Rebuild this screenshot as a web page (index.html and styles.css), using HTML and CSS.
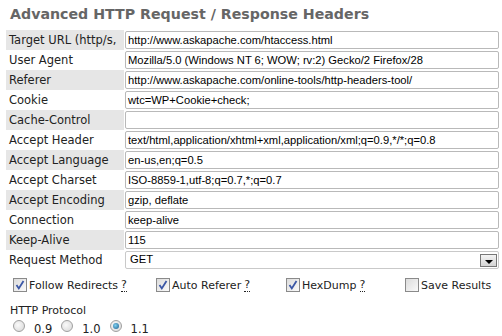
FILE: index.html
```html
<!DOCTYPE html>
<html>
<head>
<meta charset="utf-8">
<link rel="stylesheet" href="styles.css">
</head>
<body>
<h1 class="title">Advanced HTTP Request / Response Headers</h1>
<div class="form">
  <div class="lbl alt">Target URL (http/s,</div><div class="input">http://www.askapache.com/htaccess.html</div>
  <div class="lbl">User Agent</div><div class="input">Mozilla/5.0 (Windows NT 6; WOW; rv:2) Gecko/2 Firefox/28</div>
  <div class="lbl alt">Referer</div><div class="input">http://www.askapache.com/online-tools/http-headers-tool/</div>
  <div class="lbl">Cookie</div><div class="input">wtc=WP+Cookie+check;</div>
  <div class="lbl alt">Cache-Control</div><div class="input"></div>
  <div class="lbl">Accept Header</div><div class="input">text/html,application/xhtml+xml,application/xml;q=0.9,*/*;q=0.8</div>
  <div class="lbl alt">Accept Language</div><div class="input">en-us,en;q=0.5</div>
  <div class="lbl">Accept Charset</div><div class="input">ISO-8859-1,utf-8;q=0.7,*;q=0.7</div>
  <div class="lbl alt">Accept Encoding</div><div class="input">gzip, deflate</div>
  <div class="lbl">Connection</div><div class="input">keep-alive</div>
  <div class="lbl alt">Keep-Alive</div><div class="input">115</div>
  <div class="lbl">Request Method</div><div class="select"><span class="sel-text">GET</span><span class="sel-btn"><svg width="10" height="6" viewBox="0 0 10 6"><path d="M1 1h8L5 5z" fill="#000"/></svg></span></div>
</div>
<div class="opts">
  <label class="opt w1"><span class="cb on"><svg width="14" height="14" viewBox="0 0 14 14"><path d="M3.5 7l2.3 3.4L10.5 3" fill="none" stroke="#3b57a6" stroke-width="1.8"/></svg></span>Follow Redirects <abbr>?</abbr></label>
  <label class="opt w2"><span class="cb on"><svg width="14" height="14" viewBox="0 0 14 14"><path d="M3.5 7l2.3 3.4L10.5 3" fill="none" stroke="#3b57a6" stroke-width="1.8"/></svg></span>Auto Referer <abbr>?</abbr></label>
  <label class="opt w3"><span class="cb on"><svg width="14" height="14" viewBox="0 0 14 14"><path d="M3.5 7l2.3 3.4L10.5 3" fill="none" stroke="#3b57a6" stroke-width="1.8"/></svg></span>HexDump <abbr>?</abbr></label>
  <label class="opt"><span class="cb"></span>Save Results</label>
</div>
<div class="proto">
  <div class="proto-title">HTTP Protocol</div>
  <div class="radios">
    <span class="rb"></span><span class="rl">0.9</span>
    <span class="rb"></span><span class="rl">1.0</span>
    <span class="rb on"></span><span class="rl">1.1</span>
  </div>
</div>
</body>
</html>
```
FILE: styles.css
```css
html, body {
  margin: 0;
  padding: 0;
  background: #fff;
}
body {
  font-family: "DejaVu Sans", Verdana, sans-serif;
  color: #222;
  width: 502px;
  height: 336px;
  overflow: hidden;
}
.title {
  margin: 0;
  padding: 5px 0 0 10px;
  height: 26px;
  box-sizing: border-box;
  font-size: 14.2px;
  font-weight: bold;
  color: #666;
  line-height: 19px;
}
.form {
  margin: 4px 3px 0 6px;
  display: grid;
  grid-template-columns: 118px 1fr;
  grid-auto-rows: 20px;
  column-gap: 1px;
}
.lbl {
  font-size: 11.5px;
  line-height: 20px;
  padding-left: 3px;
  white-space: nowrap;
  overflow: hidden;
  color: #222;
}
.lbl.alt {
  background: #e6e6e6;
}
.input, .select {
  margin: 1px 0;
  height: 18px;
  box-sizing: border-box;
  border: 1px solid #b9b9b9;
  border-radius: 2px;
  font-family: "Liberation Sans", Arial, sans-serif;
  font-size: 11.2px;
  line-height: 16px;
  padding-left: 2px;
  color: #000;
  white-space: nowrap;
  overflow: hidden;
}
.select {
  display: flex;
  justify-content: space-between;
  align-items: center;
  border-color: #c9c9c9;
  padding-left: 4px;
  padding-right: 1px;
}
.sel-text {
  line-height: 14px;
  align-self: flex-start;
}
.sel-btn {
  width: 17px;
  height: 13px;
  margin-top: 1px;
  box-sizing: border-box;
  border: 1px solid #777;
  background: linear-gradient(#f4f4f4, #d4d4d4);
  display: flex;
  align-items: flex-end;
  justify-content: center;
  padding-bottom: 1px;
}
.opts {
  display: flex;
  margin: 7px 0 0 13px;
  height: 16px;
  align-items: center;
  font-size: 11px;
}
.opt {
  display: flex;
  align-items: center;
  white-space: nowrap;
}
.w1 { width: 143px; }
.w2 { width: 130px; }
.w3 { width: 119px; }
.cb {
  width: 14px;
  height: 14px;
  box-sizing: border-box;
  border: 1px solid #8a8a8a;
  background: linear-gradient(135deg, #dcdcdc, #fafafa);
  margin-right: 2px;
  display: inline-flex;
  position: relative;
}
.cb svg {
  position: absolute;
  left: -1px;
  top: -1px;
}
abbr {
  text-decoration: none;
  border-bottom: 1px dotted #222;
  margin-left: 3px;
}
.proto {
  margin: 11px 0 0 10px;
  font-size: 11px;
}
.proto-title {
  line-height: 13px;
}
.radios {
  display: flex;
  align-items: flex-start;
  margin: 3px 0 0 3px;
}
.rb {
  width: 12px;
  height: 12px;
  box-sizing: border-box;
  border-radius: 50%;
  border: 1px solid #a0a0a0;
  background: radial-gradient(circle at 40% 40%, #fafafa, #d6d6d6);
  margin-right: 9px;
  position: relative;
}
.rb.on::after {
  content: "";
  position: absolute;
  left: 2px;
  top: 2px;
  width: 6px;
  height: 6px;
  border-radius: 50%;
  background: radial-gradient(circle at 40% 40%, #7fd0f0, #1a5c8c);
}
.rl {
  font-size: 11.5px;
  line-height: 12px;
  margin-top: 3px;
  margin-right: 9px;
}
```
